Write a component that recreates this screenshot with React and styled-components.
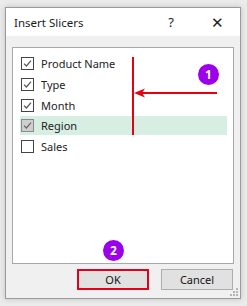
import React from "react";
import styled, { createGlobalStyle } from "styled-components";

const Global = createGlobalStyle`
   html, body {
      margin: 0;
      padding: 0;
      background: #ebebeb;
      font-family: "Noto Sans", "Open Sans", sans-serif;
   }
`;

const Page = styled.div`
   width: 247px;
   height: 306px;
   padding: 7px 0 0 5px;
   box-sizing: border-box;
   position: relative;
`;

const Dialog = styled.div`
   width: 236px;
   height: 292px;
   box-sizing: border-box;
   border: 1px solid #9a9a9a;
   background: #f0f0f0;
   box-shadow: 0 0 6px rgba(0, 0, 0, 0.18);
   display: flex;
   flex-direction: column;
   position: relative;
`;

const TitleBar = styled.div`
   height: 28px;
   background: #fff;
   display: flex;
   align-items: center;
   padding-left: 8px;
   font-size: 11.5px;
   color: #1a1a1a;
`;

const Title = styled.span`
   flex: 1;
`;

const TitleButton = styled.span`
   width: 46px;
   text-align: center;
   font-size: ${({ $big }) => ($big ? "15px" : "13px")};
   color: #222;
`;

const Body = styled.div`
   flex: 1;
   display: flex;
   flex-direction: column;
   padding: 11px 6px 0 6px;
`;

const ListBox = styled.div`
   height: 217px;
   box-sizing: border-box;
   background: #fff;
   border: 1px solid #a8a8a8;
   padding: 6px 6px 0 7px;
   display: flex;
   flex-direction: column;
   gap: 1.8px;
`;

const Row = styled.div`
   height: 19px;
   display: flex;
   align-items: center;
   gap: 6px;
   padding-left: 1px;
   background: ${({ $selected }) => ($selected ? "#d6efe2" : "transparent")};
   font-size: 11px;
   color: #222;
`;

const Box = styled.span`
   width: 11px;
   height: 11px;
   border: 1px solid ${({ $dim }) => ($dim ? "#8a8a8a" : "#444")};
   background: ${({ $dim }) => ($dim ? "#cfcfcf" : "#fff")};
   display: flex;
   align-items: center;
   justify-content: center;
   margin-right: 1px;
`;

const Footer = styled.div`
   display: flex;
   justify-content: flex-end;
   gap: 12px;
   padding: 5px 1px 0 0;
`;

const Button = styled.button`
   width: 72px;
   height: 21px;
   box-sizing: border-box;
   background: #e1e1e1;
   border: ${({ $marked }) =>
      $marked ? "2px solid #e3001b" : "1px solid #adadad"};
   font-family: "Noto Sans", sans-serif;
   font-size: 11px;
   color: #111;
   padding: 0;
`;

const Grip = styled.svg`
   position: absolute;
   right: 2px;
   bottom: 2px;
`;

const Badge = styled.div`
   position: absolute;
   left: ${({ $x }) => $x}px;
   top: ${({ $y }) => $y}px;
   width: 21px;
   height: 21px;
   border-radius: 50%;
   background: #9b00e8;
   color: #fff;
   font-size: 12px;
   font-weight: 700;
   display: flex;
   align-items: center;
   justify-content: center;
`;

const Overlay = styled.svg`
   position: absolute;
   left: 0;
   top: 0;
   pointer-events: none;
`;

const Check = ({ color }) => (
   <svg width="9" height="9" viewBox="0 0 9 9">
      <path d="M1 4.6 L3.4 7 L8 1.6" fill="none" stroke={color} strokeWidth="1.2" />
   </svg>
);

const fields = [
   { name: "Product Name", checked: true },
   { name: "Type", checked: true },
   { name: "Month", checked: true },
   { name: "Region", checked: true, selected: true },
   { name: "Sales", checked: false },
];

const App = () => {
   return (
      <>
         <Global />
         <Page>
            <Dialog>
               <TitleBar>
                  <Title>Insert Slicers</Title>
                  <TitleButton>?</TitleButton>
                  <TitleButton $big>✕</TitleButton>
               </TitleBar>
               <Body>
                  <ListBox>
                     {fields.map((f) => (
                        <Row key={f.name} $selected={f.selected}>
                           <Box $dim={f.selected}>
                              {f.checked && (
                                 <Check color={f.selected ? "#666" : "#555"} />
                              )}
                           </Box>
                           {f.name}
                        </Row>
                     ))}
                  </ListBox>
                  <Footer>
                     <Button $marked>OK</Button>
                     <Button>Cancel</Button>
                  </Footer>
               </Body>
               <Grip width="8" height="8" viewBox="0 0 8 8">
                  <g fill="#b5b5b5">
                     <rect x="6" y="0" width="2" height="2" />
                     <rect x="3" y="3" width="2" height="2" />
                     <rect x="6" y="3" width="2" height="2" />
                     <rect x="0" y="6" width="2" height="2" />
                     <rect x="3" y="6" width="2" height="2" />
                     <rect x="6" y="6" width="2" height="2" />
                  </g>
               </Grip>
            </Dialog>
            <Overlay width="247" height="306">
               <line x1="133" y1="57" x2="133" y2="135" stroke="#e8000f" strokeWidth="2" />
               <line x1="138" y1="93" x2="217" y2="93" stroke="#e8000f" strokeWidth="2" />
               <path d="M134 93 L145 88.5 L142 93 L145 97.5 Z" fill="#e8000f" />
            </Overlay>
            <Badge $x={198} $y={64}>1</Badge>
            <Badge $x={103} $y={240}>2</Badge>
         </Page>
      </>
   );
};

export default App;
